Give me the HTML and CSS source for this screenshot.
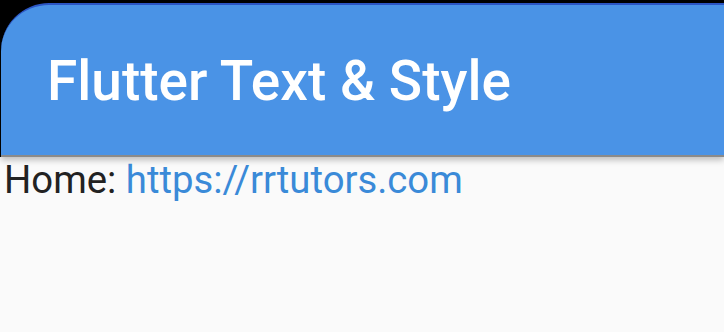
FILE: index.html
```html
<!DOCTYPE html>
<html>
<head>
<meta charset="utf-8">
<link rel="stylesheet" href="styles.css">
</head>
<body>
<div class="screen">
  <header class="appbar">
    <h1 class="title">Flutter Text &amp; Style</h1>
  </header>
  <main class="content">
    <p class="line">Home: <a class="link" href="#">https://rrtutors.com</a></p>
  </main>
</div>
</body>
</html>
```
FILE: styles.css
```css
html, body {
  margin: 0;
  padding: 0;
  background: #000;
}
.screen {
  width: 724px;
  height: 332px;
  padding-top: 3px;
  box-sizing: border-box;
  display: flex;
  flex-direction: column;
  background: #000;
  overflow: hidden;
}
.appbar {
  position: relative;
  z-index: 1;
  height: 154px;
  box-sizing: border-box;
  background: #4a93e6;
  border-top: 2px solid #2b55c4;
  border-top-left-radius: 48px;
  margin-left: 1px;
  border-bottom: 2px solid #8a8a8a;
  box-shadow: 0 3px 6px rgba(0,0,0,0.25);
  display: flex;
  align-items: center;
  padding-left: 46px;
  padding-top: 2px;
}
.title {
  margin: 0;
  font-family: Roboto, "Liberation Sans", sans-serif;
  font-weight: 500;
  font-size: 55px;
  color: #fff;
  letter-spacing: 0;
}
.content {
  flex: 1;
  background: #fafafa;
}
.line {
  margin: 0;
  padding-left: 4px;
  font-family: Roboto, "Liberation Sans", sans-serif;
  font-size: 38.3px;
  line-height: 46px;
  color: #222;
}
.link {
  color: #3a8ad8;
  text-decoration: none;
}
```
